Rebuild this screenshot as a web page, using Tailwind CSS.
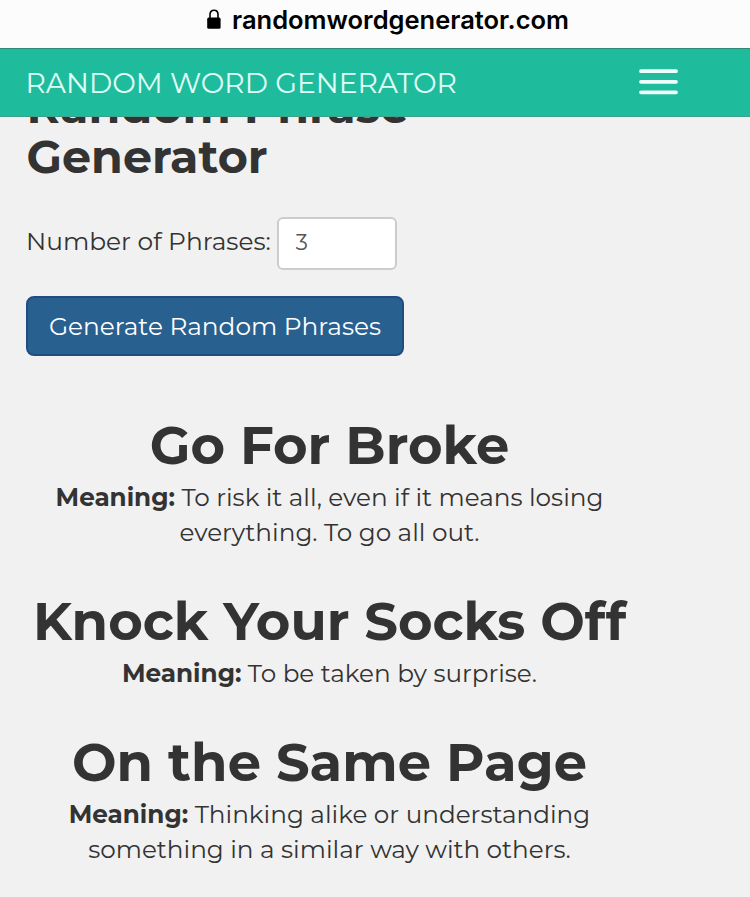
<!DOCTYPE html>
<html lang="en">
  <head>
    <meta charset="UTF-8" />
    <meta name="viewport" content="width=device-width, initial-scale=1.0" />
    <title>Random Phrase Generator</title>
    <script src="https://cdn.jsdelivr.net/npm/@tailwindcss/browser@4"></script>
  </head>
  <body class="h-[897px] overflow-hidden bg-[#f1f1f1] text-[#333333] font-[Montserrat,Inter,sans-serif]">
    <!-- Browser address bar -->
    <div class="relative z-10 flex h-12 items-start gap-[11px] bg-[#fcfcfc] pl-[207px] text-black">
      <svg class="mt-[9px] h-5 w-3.5" viewBox="0 0 14 20" fill="none">
        <path d="M3 10V5.5C3 2.8 4.6 1.2 7 1.2S11 2.8 11 5.5V10" stroke="currentColor" stroke-width="1.6" />
        <rect x="0.2" y="8.6" width="13.4" height="11.2" rx="1.6" fill="currentColor" />
      </svg>
      <span class="mt-[5px] font-[Inter,sans-serif] text-[25.5px] leading-[30px] font-semibold">randomwordgenerator.com</span>
    </div>

    <!-- Site header -->
    <header class="relative z-10 flex h-[69px] items-center justify-between border-t border-b border-t-[#2f8a74] border-b-[#3f9f8a] bg-[#1fbb9d] pr-[72px] pl-[25.5px]">
      <span class="mt-0.5 text-[28.15px] leading-none text-[#e0fff7]">RANDOM WORD GENERATOR</span>
      <svg class="-mt-[2px] h-[26px] w-[39px]" viewBox="0 0 39 26" fill="none" stroke="#f0fffb" stroke-width="3.8" stroke-linecap="round">
        <path d="M2 2.2H37M2 12.8H37M2 23.3H37" />
      </svg>
    </header>

    <main class="-mt-[35px] pl-[26px]">
      <h1 class="w-[420px] pl-[0.5px] text-[46px] leading-[50px] font-bold">Random Phrase Generator</h1>

      <form class="mt-[35px]">
        <div class="flex items-center">
          <label for="phrases" class="mb-[5px] w-[250.5px] text-[24.85px] leading-[35px] whitespace-nowrap">Number of Phrases:</label>
          <input id="phrases" type="text" value="3" class="h-[53px] w-[120.5px] rounded-md border-2 border-[#cccccc] bg-white px-[17px] pb-0.5 text-[22px] text-[#555555]" />
        </div>
        <button type="button" class="mt-[26px] h-[60px] w-[378px] rounded-lg border-2 border-[#204d80] bg-[#286090] pt-0.5 text-[24.8px] text-white">Generate Random Phrases</button>
      </form>

      <!-- Generated phrases -->
      <div class="mt-[60px] w-[607px] space-y-[42.5px] text-center text-[24.7px] leading-[35px]">
        <div>
          <h2 class="mb-[5.5px] text-[52.8px] leading-[58px] font-bold">Go For Broke</h2>
          <p><strong>Meaning:</strong> To risk it all, even if it means losing everything. To go all out.</p>
        </div>
        <div>
          <h2 class="mb-[5.5px] text-[52.8px] leading-[58px] font-bold">Knock Your Socks Off</h2>
          <p><strong>Meaning:</strong> To be taken by surprise.</p>
        </div>
        <div>
          <h2 class="mb-[5.5px] text-[52.8px] leading-[58px] font-bold">On the Same Page</h2>
          <p><strong>Meaning:</strong> Thinking alike or understanding something in a similar way with others.</p>
        </div>
      </div>
    </main>
  </body>
</html>
